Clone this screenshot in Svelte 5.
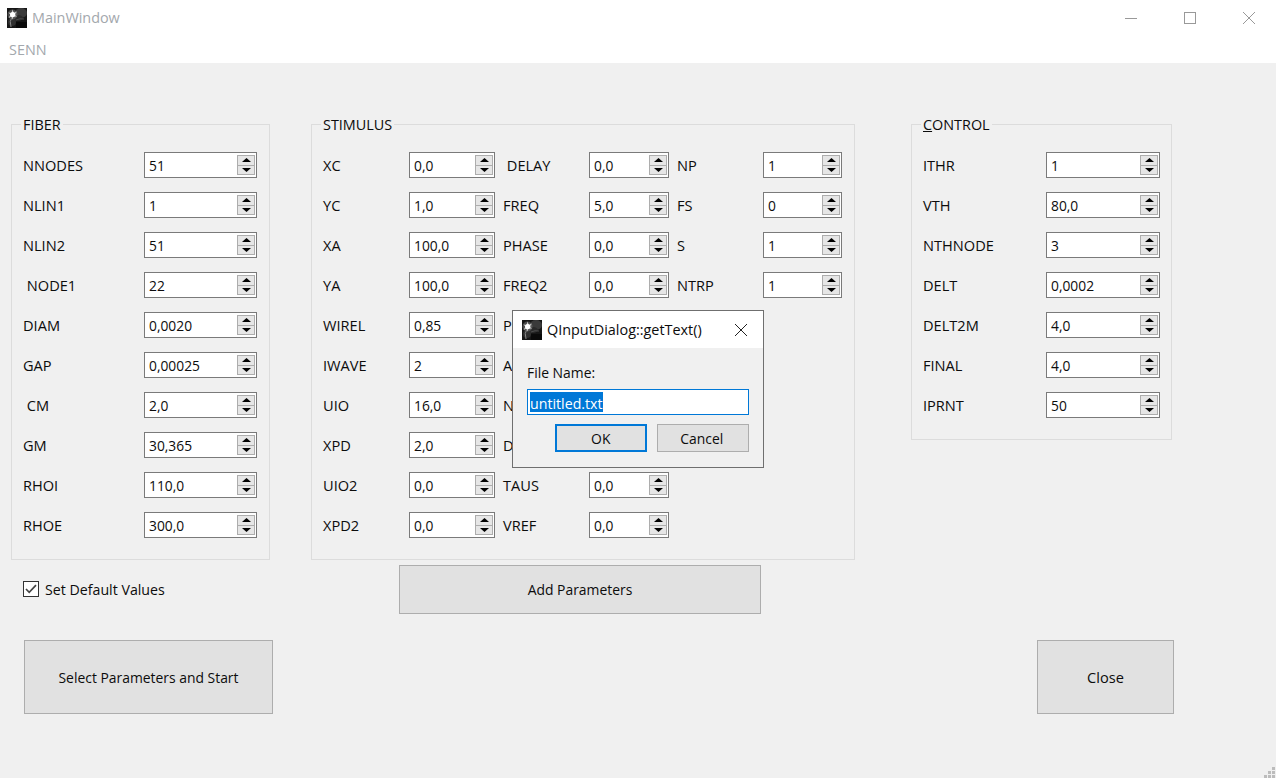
<script>
  const fiber = [["NNODES","51"],["NLIN1","1"],["NLIN2","51"],[" NODE1","22"],["DIAM","0,0020"],["GAP","0,00025"],[" CM","2,0"],["GM","30,365"],["RHOI","110,0"],["RHOE","300,0"]];
  const stim1 = [["XC","0,0"],["YC","1,0"],["XA","100,0"],["YA","100,0"],["WIREL","0,85"],["IWAVE","2"],["UIO","16,0"],["XPD","2,0"],["UIO2","0,0"],["XPD2","0,0"]];
  const stim2 = [[" DELAY","0,0"],["FREQ","5,0"],["PHASE","0,0"],["FREQ2","0,0"],["P",""],["A",""],["N",""],["D",""],["TAUS","0,0"],["VREF","0,0"]];
  const stim3 = [["NP","1"],["FS","0"],["S","1"],["NTRP","1"]];
  const control = [["ITHR","1"],["VTH","80,0"],["NTHNODE","3"],["DELT","0,0002"],["DELT2M","4,0"],["FINAL","4,0"],["IPRNT","50"]];
</script>

{#snippet icon()}
  <svg class="appicon" viewBox="0 0 20 20" aria-hidden="true">
    <rect width="20" height="20" fill="#161616"/>
    <ellipse cx="14" cy="5" rx="6" ry="5" fill="#3a3a3a"/>
    <ellipse cx="11" cy="10" rx="5" ry="3" fill="#2a2a2a"/>
    <ellipse cx="5" cy="14" rx="4" ry="4" fill="#303030"/>
    <rect x="9" y="14" width="11" height="6" fill="#0a0a0a"/>
    <path d="M4 19 Q2 13 5 9" stroke="#8a8a8a" stroke-width="1" fill="none"/>
    <path d="M9 12 Q13 10 17 11" stroke="#555" stroke-width="0.8" fill="none"/>
    <circle cx="5.5" cy="6.5" r="5" fill="#777" opacity="0.55"/>
    <path d="M5.5 1.5 L6.8 5 L10 3.5 L7.6 6.8 L10 8.5 L6.5 8.6 L5.5 11.5 L4.5 8.6 L1.5 10 L3.4 6.8 L1.5 4.5 L4.5 5 Z" fill="#cfcfcf"/>
    <circle cx="5.7" cy="6.5" r="2.6" fill="#fff"/>
  </svg>
{/snippet}

{#snippet spin(value)}
  <div class="spin">
    <span class="val">{value}</span>
    <div class="arrows">
      <div class="arrow"><svg width="9" height="4" viewBox="0 0 9 4"><path d="M4.5 0 L9 4 H0 Z"/></svg></div>
      <div class="arrow"><svg width="9" height="4" viewBox="0 0 9 4"><path d="M0 0 H9 L4.5 4 Z"/></svg></div>
    </div>
  </div>
{/snippet}

{#snippet rows(list, cls)}
  <div class="col {cls}">
    {#each list as [label, value]}
      <div class="row">
        <span class="lab">{label}</span>
        {@render spin(value)}
      </div>
    {/each}
  </div>
{/snippet}

<div class="window">
  <header class="titlebar">
    {@render icon()}
    <span class="title">MainWindow</span>
    <div class="controls">
      <svg width="14" height="14" viewBox="0 0 14 14"><path d="M1 7.5 H13" stroke="#999" fill="none"/></svg>
      <svg width="14" height="14" viewBox="0 0 14 14"><rect x="1.5" y="1.5" width="11" height="11" stroke="#999" fill="none"/></svg>
      <svg width="14" height="14" viewBox="0 0 14 14"><path d="M1 1 L13 13 M13 1 L1 13" stroke="#999" fill="none"/></svg>
    </div>
  </header>
  <nav class="menubar">SENN</nav>

  <main class="body">
    <div class="groups">
      <section class="group fiber">
        <span class="legend">FIBER</span>
        {@render rows(fiber, "c-fiber")}
      </section>
      <section class="group stimulus">
        <span class="legend">STIMULUS</span>
        {@render rows(stim1, "c-s1")}
        {@render rows(stim2, "c-s2")}
        {@render rows(stim3, "c-s3")}
      </section>
      <section class="group control">
        <span class="legend"><u>C</u>ONTROL</span>
        {@render rows(control, "c-control")}
      </section>
    </div>

    <div class="midrow">
      <label class="check">
        <span class="box"><svg width="12" height="10" viewBox="0 0 12 10"><path d="M1 5 L4.2 8.3 L11 1.2" stroke="#444" stroke-width="1.7" fill="none"/></svg></span>
        Set Default Values
      </label>
      <button class="btn add">Add Parameters</button>
    </div>

    <div class="bottomrow">
      <button class="btn start">Select Parameters and Start</button>
      <button class="btn close">Close</button>
    </div>

    <div class="grip" aria-hidden="true">
      <i class="g1"></i><i class="g2"></i><i class="g3"></i><i class="g4"></i><i class="g5"></i><i class="g6"></i>
    </div>
  </main>

  <div class="dialog">
    <div class="dlg-title">
      {@render icon()}
      <span class="dlg-name">QInputDialog::getText()</span>
      <svg class="dlg-x" width="14" height="14" viewBox="0 0 14 14"><path d="M1 1 L13 13 M13 1 L1 13" stroke="#222" fill="none"/></svg>
    </div>
    <div class="dlg-body">
      <div class="dlg-label">File Name:</div>
      <div class="dlg-input"><span class="sel">untitled.txt</span></div>
      <div class="dlg-buttons">
        <button class="btn ok">OK</button>
        <button class="btn cancel">Cancel</button>
      </div>
    </div>
  </div>
</div>

<style>
  :global(body) { margin: 0; background: #f0f0f0; }
  .window {
    position: relative;
    width: 1276px;
    height: 778px;
    overflow: hidden;
    display: flex;
    flex-direction: column;
    background: #f0f0f0;
    font-family: "Open Sans", "Noto Sans", sans-serif;
    font-size: 13.9px;
    color: #0c0c0c;
  }
  .titlebar {
    height: 35px;
    background: #fff;
    display: flex;
    align-items: center;
    padding-left: 7px;
    box-sizing: border-box;
    flex: none;
  }
  .appicon { width: 20px; height: 20px; flex: none; }
  .title { margin-left: 5px; color: #a3a8ad; font-size: 14.4px; }
  .controls {
    margin-left: auto;
    display: flex;
    gap: 45px;
    padding-right: 20px;
  }
  .menubar {
    height: 28px;
    flex: none;
    background: #fff;
    padding-left: 9px;
    color: #a3a8ad;
    line-height: 30px;
    box-sizing: border-box;
    font-size: 14.4px;
  }
  .body { flex: 1; position: relative; }
  .groups {
    display: flex;
    padding: 61px 0 0 11px;
    align-items: flex-start;
  }
  .group {
    position: relative;
    box-sizing: border-box;
    border: 1px solid #dcdcdc;
    padding-top: 27px;
    display: flex;
  }
  .fiber { width: 259px; height: 436px; padding-left: 11px; }
  .stimulus { width: 544px; height: 436px; margin-left: 41px; padding-left: 11px; }
  .control { width: 261px; height: 316px; margin-left: 56px; padding-left: 11px; }
  .legend {
    position: absolute;
    top: -10px;
    left: 9px;
    padding: 0 2px;
    background: #f0f0f0;
    line-height: 20px;
    font-size: 14.4px;
  }
  .col { display: flex; flex-direction: column; gap: 14px; }
  .row { display: flex; align-items: center; height: 26px; }
  .lab { white-space: pre; font-size: 14.6px; }
  .c-fiber .lab { width: 121px; }
  .c-control .lab { width: 123px; }
  .c-s1 .lab { width: 86px; }
  .c-s2 { margin-left: 8px; }
  .c-s2 .lab { width: 86px; }
  .c-s3 { margin-left: 8px; }
  .c-s3 .lab { width: 86px; }
  .spin {
    box-sizing: border-box;
    height: 26px;
    border: 1px solid #7a7a7a;
    background: #fff;
    display: flex;
    align-items: center;
    padding-left: 4px;
    position: relative;
  }
  .c-fiber .spin { width: 113px; }
  .c-control .spin { width: 114px; }
  .c-s1 .spin { width: 86px; }
  .c-s2 .spin { width: 80px; }
  .c-s3 .spin { width: 79px; }
  .val { flex: 1; padding-top: 1px; font-size: 13.8px; }
  .arrows {
    width: 18px;
    height: 20px;
    margin-right: 1px;
    display: flex;
    flex-direction: column;
  }
  .arrow {
    flex: 1;
    box-sizing: border-box;
    background: #e6e6e6;
    border: 1px solid #adadad;
    display: flex;
    align-items: center;
    justify-content: center;
  }
  .arrow + .arrow { border-top: none; }
  .arrow svg { display: block; fill: #000; }

  .btn {
    box-sizing: border-box;
    font: inherit;
    color: inherit;
    background: #e1e1e1;
    border: 1px solid #adadad;
    padding: 0;
    border-radius: 0;
  }
  .midrow {
    display: flex;
    align-items: flex-start;
    padding-left: 23px;
    margin-top: 5px;
  }
  .check {
    display: flex;
    align-items: center;
    gap: 6px;
    width: 376px;
    height: 49px;
    font-size: 14.2px;
    padding-bottom: 1px;
    box-sizing: border-box;
  }
  .box {
    box-sizing: border-box;
    width: 16px;
    height: 16px;
    border: 1px solid #333;
    background: #fff;
    display: flex;
    align-items: center;
    justify-content: center;
  }
  .add { width: 362px; height: 49px; padding-bottom: 1px; }
  .bottomrow {
    display: flex;
    justify-content: space-between;
    padding: 0 102px 0 24px;
    margin-top: 26px;
  }
  .start { width: 249px; height: 74px; }
  .close { width: 137px; height: 74px; font-size: 14.6px; }

  .grip {
    position: absolute;
    right: 1px;
    bottom: 1px;
    width: 10px;
    height: 10px;
  }
  .grip i { position: absolute; width: 3px; height: 3px; background: #bcbcbc; }
  .g1 { right: 0; top: 0; }
  .g2 { right: 0; top: 4px; }
  .g3 { right: 4px; top: 4px; }
  .g4 { right: 0; top: 8px; }
  .g5 { right: 4px; top: 8px; }
  .g6 { right: 8px; top: 8px; }

  .dialog {
    position: absolute;
    left: 512px;
    top: 310px;
    width: 252px;
    height: 158px;
    box-sizing: border-box;
    border: 1px solid #6f6f6f;
    background: #f0f0f0;
    display: flex;
    flex-direction: column;
  }
  .dlg-title {
    height: 37px;
    background: #fff;
    display: flex;
    align-items: center;
    padding-left: 9px;
    flex: none;
  }
  .dlg-name { margin-left: 5px; font-size: 14.4px; }
  .dlg-x { margin-left: auto; margin-right: 15px; }
  .dlg-body { padding: 15px 14px 0; }
  .dlg-label { line-height: 20px; }
  .dlg-input {
    box-sizing: border-box;
    margin-top: 6px;
    width: 222px;
    height: 26px;
    border: 1px solid #0078d7;
    background: #fff;
    display: flex;
    align-items: center;
    padding-left: 2px;
  }
  .sel { background: #0078d7; color: #fff; line-height: 23px; font-size: 14.2px; height: 20px; display: block; }
  .dlg-buttons {
    display: flex;
    gap: 10px;
    margin-top: 9px;
    padding-left: 28px;
  }
  .ok { width: 92px; height: 28px; border: 2px solid #0078d7; }
  .cancel { width: 93px; height: 28px; padding-right: 2px; }
</style>
